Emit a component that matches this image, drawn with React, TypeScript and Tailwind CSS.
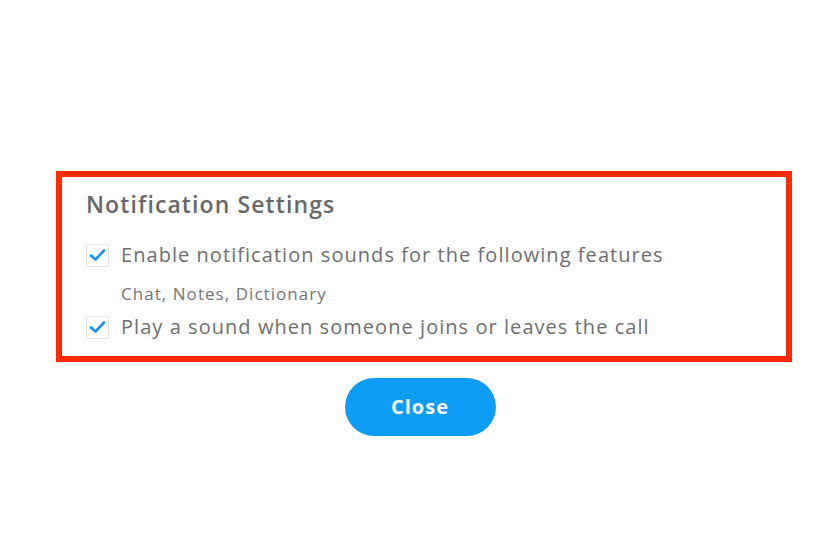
import React from "react";

function Check() {
  return (
    <div className="w-[23px] h-[23px] border border-[#e3e3e3] rounded-[2px] bg-white flex items-center justify-center shrink-0">
      <svg width="17" height="14" viewBox="0 0 17 14" fill="none">
        <path d="M2 7.5 L6.5 11.5 L15 2.5" stroke="#1a94ee" strokeWidth="2.6" strokeLinecap="round" strokeLinejoin="round" />
      </svg>
    </div>
  );
}

export default function App() {
  return (
    <div className="w-[840px] h-[560px] bg-white flex flex-col items-center pt-[171px]" style={{ fontFamily: '"Open Sans", sans-serif' }}>
      <div className="w-[736px] h-[191px] ml-[8px] border-[6px] border-[#ff2a00] pl-[24px] pt-[9px] text-[#6e6e6e]">
        <div className="text-[23px] font-semibold leading-[36px] tracking-[1.1px] text-[#686868]">Notification Settings</div>
        <div className="flex items-center gap-[12px] mt-[20px]">
          <Check />
          <span className="text-[20px] leading-[26px] tracking-[1.05px]">Enable notification sounds for the following features</span>
        </div>
        <div className="pl-[35px] mt-[15px] text-[17px] leading-[22px] tracking-[1.05px] text-[#757575]">Chat, Notes, Dictionary</div>
        <div className="flex items-center gap-[12px] mt-[9px]">
          <Check />
          <span className="text-[20px] leading-[26px] tracking-[1.05px]">Play a sound when someone joins or leaves the call</span>
        </div>
      </div>
      <button className="mt-[16px] w-[151px] h-[58px] rounded-full bg-[#0d9cf6] text-white text-[20px] font-bold tracking-[1px]">
        Close
      </button>
    </div>
  );
}
